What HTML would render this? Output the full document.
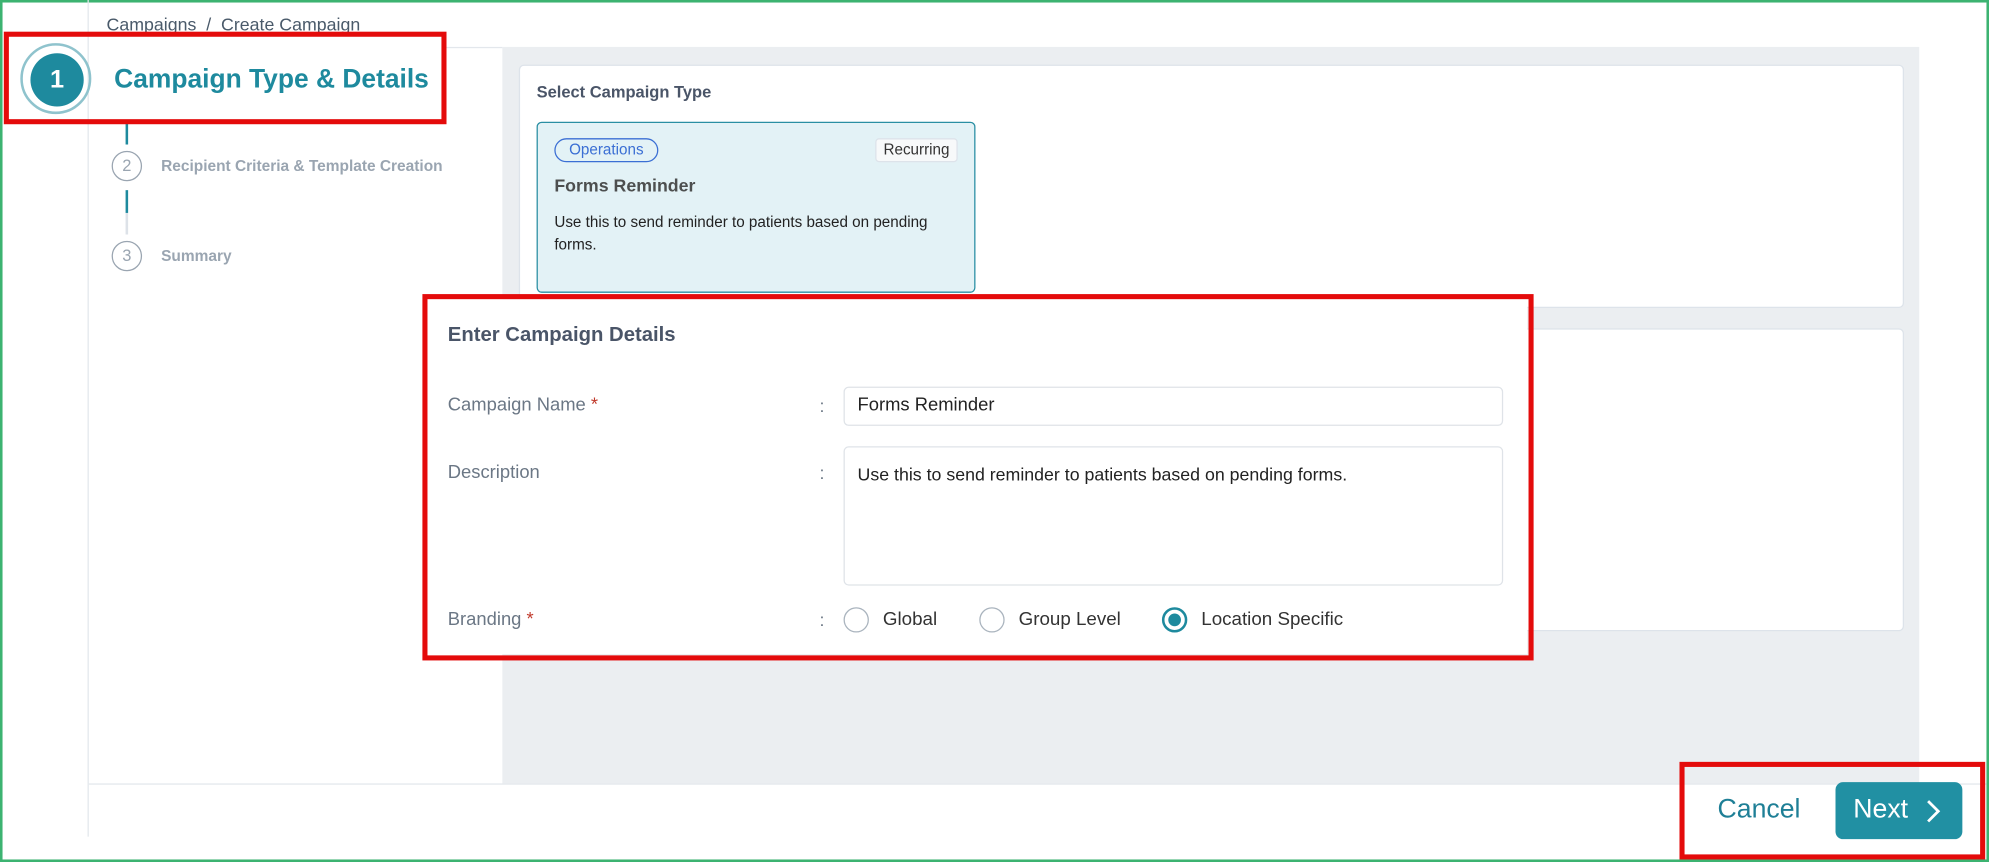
<!DOCTYPE html>
<html><head><meta charset="utf-8"><style>
html,body{margin:0;padding:0;width:1989px;height:862px;overflow:hidden;background:#fff;font-family:"Liberation Sans",sans-serif}
#s{position:absolute;left:0;top:0;width:1568px;height:680px;transform-origin:0 0;transform:scale(1.26849,1.26765);background:#fff}
.a{position:absolute}
.red{position:absolute;border:4px solid #e40b0b;box-sizing:border-box}
.t{position:absolute;white-space:nowrap}
</style></head><body><div id="s">
<div class="a" style="left:0;top:0;width:1568px;height:680px;border:2px solid #3cb371;box-sizing:border-box"></div>
<div class="a" style="left:69px;top:0;width:1px;height:660px;background:#e3e7ec"></div>
<div class="t" style="left:84px;top:11px;font-size:14px;color:#4a5a6a">Campaigns &nbsp;/ &nbsp;Create Campaign</div>
<div class="a" style="left:396px;top:37px;width:1117px;height:581px;background:#ebeef1"></div>
<div class="a" style="left:350px;top:37px;width:46px;height:1px;background:#e3e7ec"></div>
<div class="a" style="left:70px;top:618px;width:1496px;height:1px;background:#e3e7ec"></div>
<!-- stepper -->
<div class="a" style="left:16px;top:34px;width:56px;height:56px;border-radius:50%;border:2px solid #8fc3cd;box-sizing:border-box"></div>
<div class="a" style="left:24px;top:42px;width:42px;height:42px;border-radius:50%;background:#1e8a9e;color:#fff;font-weight:bold;font-size:20px;text-align:center;line-height:42px">1</div>
<div class="t" style="left:90px;top:51px;font-size:20.8px;font-weight:bold;color:#1e8a9e">Campaign Type &amp; Details</div>
<div class="a" style="left:99px;top:97px;width:2px;height:17px;background:#1e8a9e"></div>
<div class="a" style="left:88px;top:119px;width:24px;height:24px;border-radius:50%;border:1.5px solid #9aa5b1;box-sizing:border-box;text-align:center;line-height:21px;font-size:13px;color:#9aa5b1">2</div>
<div class="t" style="left:127px;top:124px;font-size:12.2px;font-weight:bold;color:#9aa5b1">Recipient Criteria &amp; Template Creation</div>
<div class="a" style="left:99px;top:150px;width:2px;height:18px;background:#1e8a9e"></div>
<div class="a" style="left:99px;top:168px;width:2px;height:17px;background:#dde2e8"></div>
<div class="a" style="left:88px;top:190px;width:24px;height:24px;border-radius:50%;border:1.5px solid #9aa5b1;box-sizing:border-box;text-align:center;line-height:21px;font-size:13px;color:#9aa5b1">3</div>
<div class="t" style="left:127px;top:195px;font-size:12.2px;font-weight:bold;color:#9aa5b1">Summary</div>
<div class="red" style="left:3px;top:25px;width:349px;height:73px"></div>
<!-- card 1 -->
<div class="a" style="left:409px;top:51px;width:1092px;height:192px;background:#fff;border:1px solid #dde3ea;border-radius:4px;box-sizing:border-box"></div>
<div class="t" style="left:423px;top:65px;font-size:13px;font-weight:bold;color:#4a5568">Select Campaign Type</div>
<div class="a" style="left:423px;top:96px;width:346px;height:135px;background:#e3f2f6;border:1px solid #2a8fa3;border-radius:4px;box-sizing:border-box"></div>
<div class="t" style="left:437px;top:109px;width:82px;height:19px;border:1px solid #3b6fd4;border-radius:10px;box-sizing:border-box;font-size:12px;color:#3b6fd4;text-align:center;line-height:17px">Operations</div>
<div class="t" style="left:690px;top:109px;width:65px;height:19px;border:1px solid #dde3ea;background:#f7f9fa;border-radius:3px;box-sizing:border-box;font-size:12px;color:#333;text-align:center;line-height:17px">Recurring</div>
<div class="t" style="left:437px;top:138px;font-size:14px;color:#333;font-weight:bold;opacity:.85">Forms Reminder</div>
<div class="a" style="left:437px;top:166px;width:325px;font-size:12px;line-height:18px;color:#222">Use this to send reminder to patients based on pending forms.</div>
<!-- card 2 -->
<div class="a" style="left:409px;top:259px;width:1092px;height:239px;background:#fff;border:1px solid #dde3ea;border-radius:4px;box-sizing:border-box"></div>
<div class="a" style="left:337px;top:236px;width:867px;height:280px;background:#fff"></div>
<div class="t" style="left:353px;top:256px;font-size:16px;font-weight:bold;color:#4a5568">Enter Campaign Details</div>
<div class="t" style="left:353px;top:312px;font-size:14.5px;color:#6b7785">Campaign Name <span style="color:#c0392b">*</span></div>
<div class="t" style="left:353px;top:365px;font-size:14.5px;color:#6b7785">Description</div>
<div class="t" style="left:353px;top:481px;font-size:14.5px;color:#6b7785">Branding <span style="color:#c0392b">*</span></div>
<div class="t" style="left:646px;top:312px;font-size:14px;color:#6b7785">:</div>
<div class="t" style="left:646px;top:365px;font-size:14px;color:#6b7785">:</div>
<div class="t" style="left:646px;top:481px;font-size:14px;color:#6b7785">:</div>
<div class="a" style="left:665px;top:305px;width:520px;height:31px;border:1px solid #dfe3e8;border-radius:4px;box-sizing:border-box"></div>
<div class="t" style="left:676px;top:312px;font-size:14.5px;color:#222">Forms Reminder</div>
<div class="a" style="left:665px;top:352px;width:520px;height:110px;border:1px solid #dfe3e8;border-radius:4px;box-sizing:border-box"></div>
<div class="t" style="left:676px;top:366px;font-size:14px;color:#222">Use this to send reminder to patients based on pending forms.</div>
<div class="a" style="left:665px;top:479px;width:20px;height:20px;border-radius:50%;border:1.5px solid #aab4be;box-sizing:border-box"></div>
<div class="t" style="left:696px;top:481px;font-size:14.8px;color:#333">Global</div>
<div class="a" style="left:772px;top:479px;width:20px;height:20px;border-radius:50%;border:1.5px solid #aab4be;box-sizing:border-box"></div>
<div class="t" style="left:803px;top:481px;font-size:14.8px;color:#333">Group Level</div>
<div class="a" style="left:916px;top:479px;width:20px;height:20px;border-radius:50%;border:2px solid #1e8a9e;box-sizing:border-box"></div>
<div class="a" style="left:921px;top:484px;width:10px;height:10px;border-radius:50%;background:#1e8a9e"></div>
<div class="t" style="left:947px;top:481px;font-size:14.8px;color:#333">Location Specific</div>
<div class="red" style="left:333px;top:232px;width:876px;height:289px"></div>
<!-- footer -->
<div class="t" style="left:1354px;top:627px;font-size:21px;color:#1e7f96">Cancel</div>
<div class="a" style="left:1447px;top:617px;width:100px;height:45px;background:#2190a3;border-radius:6px"></div>
<div class="t" style="left:1461px;top:627px;font-size:21px;color:#fff">Next</div>
<svg class="a" style="left:1516px;top:629px" width="16" height="22" viewBox="0 0 16 22"><path d="M4 3 L12 11 L4 19" fill="none" stroke="#fff" stroke-width="2.2"/></svg>
<div class="red" style="left:1324px;top:601px;width:241px;height:77px"></div>
</div></body></html>
